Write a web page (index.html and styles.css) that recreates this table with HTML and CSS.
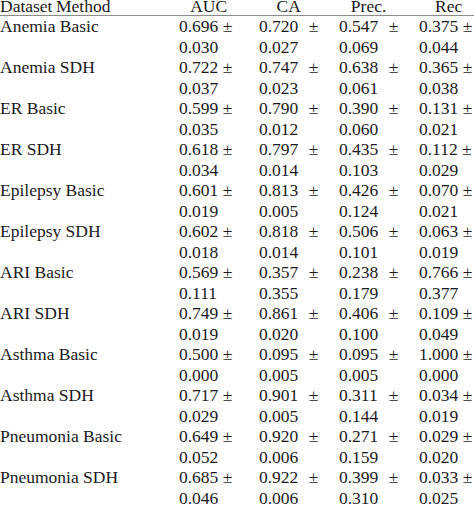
FILE: index.html
```html
<!DOCTYPE html>
<html>
<head>
<meta charset="utf-8">
<link rel="stylesheet" href="styles.css">
</head>
<body>
<div class="table">
  <div class="row head">
    <div class="name"><span class="ds">Dataset</span><span>Method</span></div>
    <div class="h">AUC</div>
    <div class="h">CA</div>
    <div class="h">Prec.</div>
    <div class="h">Rec</div>
  </div>

  <div class="row"><div class="name">Anemia Basic</div>
    <div class="v"><div class="a">0.696 ±</div><div>0.030</div></div>
    <div class="v"><div class="j"><span>0.720</span><span>±</span></div><div>0.027</div></div>
    <div class="v"><div class="j"><span>0.547</span><span>±</span></div><div>0.069</div></div>
    <div class="v"><div class="a">0.375 ±</div><div>0.044</div></div>
  </div>
  <div class="row"><div class="name">Anemia SDH</div>
    <div class="v"><div class="a">0.722 ±</div><div>0.037</div></div>
    <div class="v"><div class="j"><span>0.747</span><span>±</span></div><div>0.023</div></div>
    <div class="v"><div class="j"><span>0.638</span><span>±</span></div><div>0.061</div></div>
    <div class="v"><div class="a">0.365 ±</div><div>0.038</div></div>
  </div>
  <div class="row"><div class="name">ER Basic</div>
    <div class="v"><div class="a">0.599 ±</div><div>0.035</div></div>
    <div class="v"><div class="j"><span>0.790</span><span>±</span></div><div>0.012</div></div>
    <div class="v"><div class="j"><span>0.390</span><span>±</span></div><div>0.060</div></div>
    <div class="v"><div class="a">0.131 ±</div><div>0.021</div></div>
  </div>
  <div class="row"><div class="name">ER SDH</div>
    <div class="v"><div class="a">0.618 ±</div><div>0.034</div></div>
    <div class="v"><div class="j"><span>0.797</span><span>±</span></div><div>0.014</div></div>
    <div class="v"><div class="j"><span>0.435</span><span>±</span></div><div>0.103</div></div>
    <div class="v"><div class="a">0.112 ±</div><div>0.029</div></div>
  </div>
  <div class="row"><div class="name">Epilepsy Basic</div>
    <div class="v"><div class="a">0.601 ±</div><div>0.019</div></div>
    <div class="v"><div class="j"><span>0.813</span><span>±</span></div><div>0.005</div></div>
    <div class="v"><div class="j"><span>0.426</span><span>±</span></div><div>0.124</div></div>
    <div class="v"><div class="a">0.070 ±</div><div>0.021</div></div>
  </div>
  <div class="row"><div class="name">Epilepsy SDH</div>
    <div class="v"><div class="a">0.602 ±</div><div>0.018</div></div>
    <div class="v"><div class="j"><span>0.818</span><span>±</span></div><div>0.014</div></div>
    <div class="v"><div class="j"><span>0.506</span><span>±</span></div><div>0.101</div></div>
    <div class="v"><div class="a">0.063 ±</div><div>0.019</div></div>
  </div>
  <div class="row"><div class="name">ARI Basic</div>
    <div class="v"><div class="a">0.569 ±</div><div>0.111</div></div>
    <div class="v"><div class="j"><span>0.357</span><span>±</span></div><div>0.355</div></div>
    <div class="v"><div class="j"><span>0.238</span><span>±</span></div><div>0.179</div></div>
    <div class="v"><div class="a">0.766 ±</div><div>0.377</div></div>
  </div>
  <div class="row"><div class="name">ARI SDH</div>
    <div class="v"><div class="a">0.749 ±</div><div>0.019</div></div>
    <div class="v"><div class="j"><span>0.861</span><span>±</span></div><div>0.020</div></div>
    <div class="v"><div class="j"><span>0.406</span><span>±</span></div><div>0.100</div></div>
    <div class="v"><div class="a">0.109 ±</div><div>0.049</div></div>
  </div>
  <div class="row"><div class="name">Asthma Basic</div>
    <div class="v"><div class="a">0.500 ±</div><div>0.000</div></div>
    <div class="v"><div class="j"><span>0.095</span><span>±</span></div><div>0.005</div></div>
    <div class="v"><div class="j"><span>0.095</span><span>±</span></div><div>0.005</div></div>
    <div class="v"><div class="a">1.000 ±</div><div>0.000</div></div>
  </div>
  <div class="row"><div class="name">Asthma SDH</div>
    <div class="v"><div class="a">0.717 ±</div><div>0.029</div></div>
    <div class="v"><div class="j"><span>0.901</span><span>±</span></div><div>0.005</div></div>
    <div class="v"><div class="j"><span>0.311</span><span>±</span></div><div>0.144</div></div>
    <div class="v"><div class="a">0.034 ±</div><div>0.019</div></div>
  </div>
  <div class="row"><div class="name">Pneumonia Basic</div>
    <div class="v"><div class="a">0.649 ±</div><div>0.052</div></div>
    <div class="v"><div class="j"><span>0.920</span><span>±</span></div><div>0.006</div></div>
    <div class="v"><div class="j"><span>0.271</span><span>±</span></div><div>0.159</div></div>
    <div class="v"><div class="a">0.029 ±</div><div>0.020</div></div>
  </div>
  <div class="row"><div class="name">Pneumonia SDH</div>
    <div class="v"><div class="a">0.685 ±</div><div>0.046</div></div>
    <div class="v"><div class="j"><span>0.922</span><span>±</span></div><div>0.006</div></div>
    <div class="v"><div class="j"><span>0.399</span><span>±</span></div><div>0.310</div></div>
    <div class="v"><div class="a">0.033 ±</div><div>0.025</div></div>
  </div>
</div>
</body>
</html>
```

FILE: styles.css
```css
html, body {
  margin: 0;
  padding: 0;
  background: #ffffff;
  overflow: hidden;
}

body {
  width: 474px;
  height: 509px;
  font-family: "Liberation Serif", "Times New Roman", serif;
  font-size: 17.5px;
  line-height: 20.5px;
  color: #1a1a1a;
}

.table {
  margin-top: -4.5px;
  width: 480px;
}

.row {
  display: grid;
  grid-template-columns: 158.3px repeat(4, 59.3px);
  column-gap: 20.7px;
  white-space: nowrap;
}

.head {
  height: 19.5px;
  border-bottom: 1px solid #8c8c8c;
  width: 474px;
}

.name {
  display: flex;
}

.ds {
  margin-right: 3.5px;
}

.h {
  text-align: center;
}

.j {
  display: flex;
  justify-content: space-between;
}
```
